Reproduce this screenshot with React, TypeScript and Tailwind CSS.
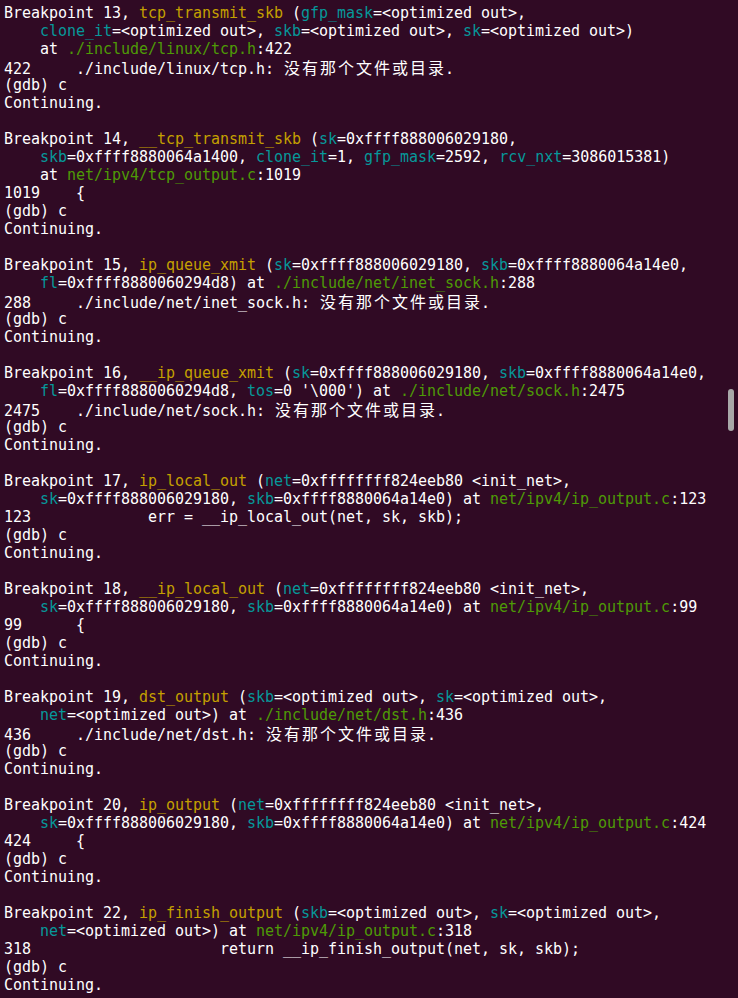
import React from "react";

const LINES: string[] = [
  "Breakpoint 13, [y:tcp_transmit_skb] ([c:gfp_mask]=<optimized out>,",
  "    [c:clone_it]=<optimized out>, [c:skb]=<optimized out>, [c:sk]=<optimized out>)",
  "    at [g:./include/linux/tcp.h]:422",
  "422     ./include/linux/tcp.h: 没有那个文件或目录.",
  "(gdb) c",
  "Continuing.",
  "",
  "Breakpoint 14, [y:__tcp_transmit_skb] ([c:sk]=0xffff888006029180,",
  "    [c:skb]=0xffff8880064a1400, [c:clone_it]=1, [c:gfp_mask]=2592, [c:rcv_nxt]=3086015381)",
  "    at [g:net/ipv4/tcp_output.c]:1019",
  "1019    {",
  "(gdb) c",
  "Continuing.",
  "",
  "Breakpoint 15, [y:ip_queue_xmit] ([c:sk]=0xffff888006029180, [c:skb]=0xffff8880064a14e0,",
  "    [c:fl]=0xffff8880060294d8) at [g:./include/net/inet_sock.h]:288",
  "288     ./include/net/inet_sock.h: 没有那个文件或目录.",
  "(gdb) c",
  "Continuing.",
  "",
  "Breakpoint 16, [y:__ip_queue_xmit] ([c:sk]=0xffff888006029180, [c:skb]=0xffff8880064a14e0,",
  "    [c:fl]=0xffff8880060294d8, [c:tos]=0 '\\000') at [g:./include/net/sock.h]:2475",
  "2475    ./include/net/sock.h: 没有那个文件或目录.",
  "(gdb) c",
  "Continuing.",
  "",
  "Breakpoint 17, [y:ip_local_out] ([c:net]=0xffffffff824eeb80 <init_net>,",
  "    [c:sk]=0xffff888006029180, [c:skb]=0xffff8880064a14e0) at [g:net/ipv4/ip_output.c]:123",
  "123             err = __ip_local_out(net, sk, skb);",
  "(gdb) c",
  "Continuing.",
  "",
  "Breakpoint 18, [y:__ip_local_out] ([c:net]=0xffffffff824eeb80 <init_net>,",
  "    [c:sk]=0xffff888006029180, [c:skb]=0xffff8880064a14e0) at [g:net/ipv4/ip_output.c]:99",
  "99      {",
  "(gdb) c",
  "Continuing.",
  "",
  "Breakpoint 19, [y:dst_output] ([c:skb]=<optimized out>, [c:sk]=<optimized out>,",
  "    [c:net]=<optimized out>) at [g:./include/net/dst.h]:436",
  "436     ./include/net/dst.h: 没有那个文件或目录.",
  "(gdb) c",
  "Continuing.",
  "",
  "Breakpoint 20, [y:ip_output] ([c:net]=0xffffffff824eeb80 <init_net>,",
  "    [c:sk]=0xffff888006029180, [c:skb]=0xffff8880064a14e0) at [g:net/ipv4/ip_output.c]:424",
  "424     {",
  "(gdb) c",
  "Continuing.",
  "",
  "Breakpoint 22, [y:ip_finish_output] ([c:skb]=<optimized out>, [c:sk]=<optimized out>,",
  "    [c:net]=<optimized out>) at [g:net/ipv4/ip_output.c]:318",
  "318                     return __ip_finish_output(net, sk, skb);",
  "(gdb) c",
  "Continuing.",
];

const COLOR: Record<string, string> = {
  y: "text-[#c4a000]",
  c: "text-[#06989a]",
  g: "text-[#4e9a06]",
};

const CJK = /[\u4e00-\u9fff]/;

function renderText(text: string, keyBase: string) {
  const out: React.ReactNode[] = [];
  let buf = "";
  let i = 0;
  for (const ch of Array.from(text)) {
    if (CJK.test(ch)) {
      if (buf) {
        out.push(<span key={`${keyBase}-t${i++}`}>{buf}</span>);
        buf = "";
      }
      out.push(
        <span
          key={`${keyBase}-k${i++}`}
          className="inline-block w-[18px] text-center text-[16px] tracking-normal [font-family:'Noto_Sans_CJK_SC','DejaVu_Sans_Mono',monospace]"
        >
          {ch}
        </span>
      );
    } else {
      buf += ch;
    }
  }
  if (buf) out.push(<span key={`${keyBase}-t${i++}`}>{buf}</span>);
  return out;
}

function Line({ src, idx }: { src: string; idx: number }) {
  const parts: React.ReactNode[] = [];
  const re = /\[(y|c|g):([^\]]*)\]/g;
  let last = 0;
  let m: RegExpExecArray | null;
  let n = 0;
  while ((m = re.exec(src)) !== null) {
    if (m.index > last) parts.push(...renderText(src.slice(last, m.index), `${idx}-${n++}`));
    parts.push(
      <span key={`${idx}-c${n++}`} className={COLOR[m[1]]}>
        {m[2]}
      </span>
    );
    last = m.index + m[0].length;
  }
  if (last < src.length) parts.push(...renderText(src.slice(last), `${idx}-${n++}`));
  return <div className="h-[18px] whitespace-pre">{parts.length ? parts : " "}</div>;
}

export default function App() {
  return (
    <div className="relative w-[738px] h-[998px] overflow-hidden bg-[#300a24] text-white">
      <div className="pt-[4px] pl-[4px] text-[15px] leading-[18px] tracking-[-0.03px] [font-family:'DejaVu_Sans_Mono','Liberation_Mono',monospace]">
        {LINES.map((l, i) => (
          <Line key={i} src={l} idx={i} />
        ))}
      </div>
      <div className="absolute right-[4px] top-[389px] w-[6px] h-[42px] rounded-full bg-[#a8a8a8]" />
    </div>
  );
}
